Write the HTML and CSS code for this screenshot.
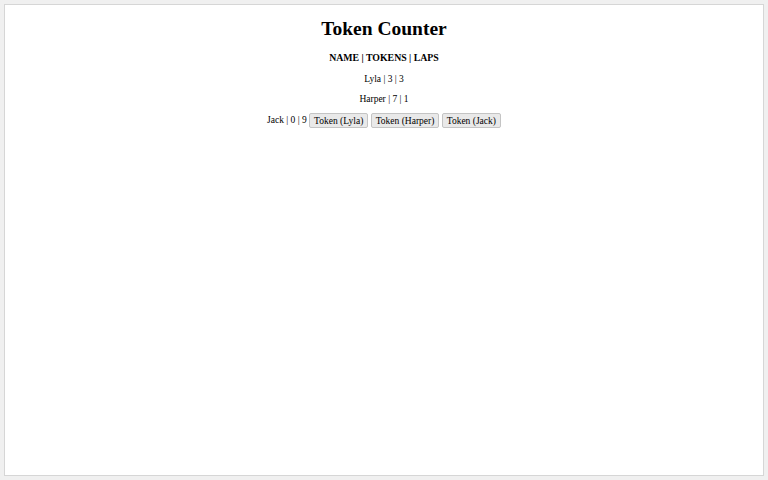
FILE: index.html
```html
<!DOCTYPE html>
<html>
<head>
<meta charset="utf-8">
<title>Token Counter</title>
<link rel="stylesheet" href="styles.css">
</head>
<body>
<main class="board">
  <h1 class="title">Token Counter</h1>
  <p class="row head">NAME | TOKENS | LAPS</p>
  <p class="row">Lyla | 3 | 3</p>
  <p class="row">Harper | 7 | 1</p>
  <p class="row">Jack | 0 | 9
    <button class="btn">Token (Lyla)</button>
    <button class="btn">Token (Harper)</button>
    <button class="btn">Token (Jack)</button>
  </p>
</main>
</body>
</html>
```

FILE: styles.css
```css
html, body {
  margin: 0;
  height: 100%;
}

body {
  background: #f0f0f0;
  padding: 4px;
  box-sizing: border-box;
  font-family: "Liberation Serif", "Times New Roman", serif;
  color: #000;
}

.board {
  box-sizing: border-box;
  height: 100%;
  background: #fff;
  border: 1px solid #d6d6d6;
  text-align: center;
  padding-top: 12px;
}

.title {
  font-size: 19.5px;
  font-weight: bold;
  margin: 0 0 12px;
  line-height: 23px;
}

.row {
  font-size: 9.5px;
  line-height: 12px;
  margin: 0 0 8px;
}

.head {
  font-weight: bold;
  font-size: 9.8px;
  margin-bottom: 9px;
}

.btn {
  font-family: "Liberation Serif", "Times New Roman", serif;
  font-size: 9.5px;
  height: 15px;
  padding: 0 4px;
  margin: 0;
  background: #e9e9e9;
  border: 1px solid #c4c4c4;
  border-radius: 2px;
  color: #000;
  vertical-align: middle;
}
```
